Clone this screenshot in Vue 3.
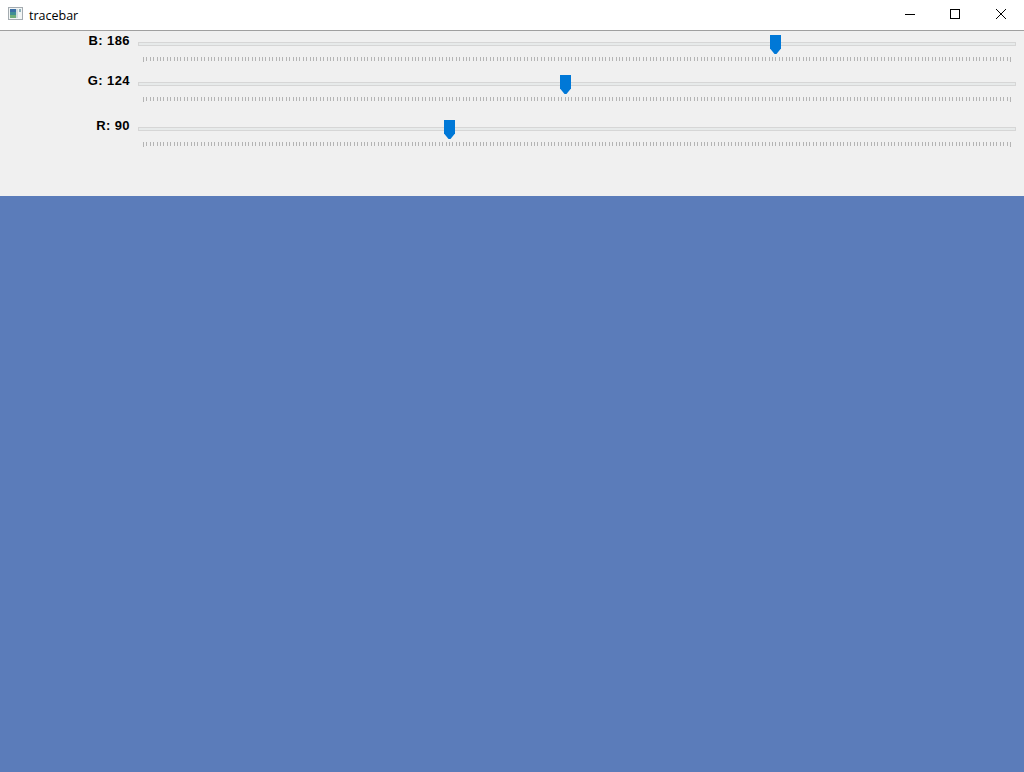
<script setup>
const sliders = [
  { label: 'B: 186', value: 186, cls: 'row-b' },
  { label: 'G: 124', value: 124, cls: 'row-g' },
  { label: 'R: 90', value: 90, cls: 'row-r' },
]
const ticks = Array.from({ length: 256 }, (_, i) => Math.round(i * 3.4) + 0.5)
const thumbLeft = (v) => `${Math.round(v * 3.4)}px`
</script>

<template>
  <div class="window">
    <header class="titlebar">
      <div class="title-left">
        <svg class="app-icon" width="16" height="13" viewBox="0 0 16 13">
          <rect x="0.5" y="0.5" width="14" height="12" fill="#f2f5f5" stroke="#a4abb0" />
          <rect x="2" y="2" width="6" height="9" fill="#3f8f94" />
          <rect x="2" y="2" width="6" height="3" fill="#3a6ea5" />
          <rect x="2" y="8" width="6" height="3" fill="#6fae78" />
          <rect x="8" y="2" width="2" height="9" fill="#cfdcde" />
          <rect x="11" y="2" width="2" height="3" fill="#8fb0b8" />
        </svg>
        <span class="title">tracebar</span>
      </div>
      <div class="controls">
        <div class="ctl">
          <svg width="12" height="12" viewBox="0 0 12 12"><path d="M2 6.5H12" stroke="#000" fill="none" /></svg>
        </div>
        <div class="ctl">
          <svg width="12" height="12" viewBox="0 0 12 12"><rect x="1.5" y="1.5" width="9" height="9" stroke="#000" fill="none" /></svg>
        </div>
        <div class="ctl">
          <svg width="12" height="12" viewBox="0 0 12 12"><path d="M1 1L11 11M11 1L1 11" stroke="#000" fill="none" /></svg>
        </div>
      </div>
    </header>
    <section class="panel">
      <div v-for="s in sliders" :key="s.label" class="row" :class="s.cls">
        <div class="label">{{ s.label }}</div>
        <div class="slider">
          <div class="track"></div>
          <svg class="thumb" :style="{ left: thumbLeft(s.value) }" width="11" height="19" viewBox="0 0 11 19">
            <path d="M0 0H11V13.5L6.5 19H4.5L0 13.5Z" fill="#0078d7" />
          </svg>
          <svg class="ticks" width="870" height="5" viewBox="0 0 870 5">
            <line v-for="(x, i) in ticks" :key="i" :x1="x" :x2="x" y1="0" :y2="i === 0 || i === 255 ? 5 : 4" stroke="#b4b4b4" />
          </svg>
        </div>
      </div>
    </section>
    <main class="canvas"></main>
  </div>
</template>

<style scoped>
.window {
  width: 1024px;
  height: 772px;
  display: flex;
  flex-direction: column;
  overflow: hidden;
  background: #5b7cba;
}
.titlebar {
  height: 30px;
  flex: none;
  display: flex;
  justify-content: space-between;
  background: #fff;
  border-bottom: 1px solid #a0a0a0;
}
.title-left {
  display: flex;
  align-items: center;
  gap: 5px;
  padding-left: 8px;
}
.app-icon {
  display: block;
  align-self: flex-start;
  margin-top: 7px;
}
.title {
  font: 12.5px "Open Sans", "Liberation Sans", sans-serif;
  color: #000;
}
.controls {
  display: flex;
}
.ctl {
  width: 46px;
  padding-bottom: 2px;
  display: flex;
  align-items: center;
  justify-content: center;
}
.panel {
  height: 165px;
  flex: none;
  background: #f0f0f0;
  display: flex;
  flex-direction: column;
}
.row {
  display: flex;
  padding-right: 8px;
}
.row-b, .row-g { height: 40px; }
.row-r { height: 45px; padding-top: 5px; }
.label {
  width: 130px;
  flex: none;
  text-align: right;
  padding-top: 2px;
  font: bold 13px/15px "Liberation Sans", Arial, sans-serif;
  letter-spacing: 0.4px;
  color: #000;
}
.slider {
  position: relative;
  margin-left: 8px;
  width: 878px;
  height: 40px;
}
.track {
  position: absolute;
  top: 11px;
  left: 0;
  width: 878px;
  height: 4px;
  box-sizing: border-box;
  background: #e7eaea;
  border: 1px solid #d6d6d6;
}
.thumb {
  position: absolute;
  top: 4px;
  display: block;
}
.ticks {
  position: absolute;
  top: 26px;
  left: 5px;
  display: block;
}
.canvas {
  flex: 1;
  background: #5b7cba;
}
</style>

<style>
body { margin: 0; }
</style>
